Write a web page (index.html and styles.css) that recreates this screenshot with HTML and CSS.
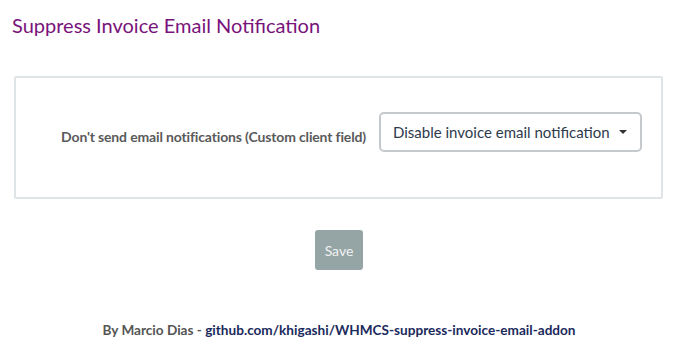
FILE: index.html
```html
<!DOCTYPE html>
<html lang="en">
<head>
  <meta charset="UTF-8" />
  <title>Suppress Invoice Email Notification</title>
  <link rel="stylesheet" href="styles.css">
</head>
<body>
  <h2 class="page-title">Suppress Invoice Email Notification</h2>

  <form class="settings-form">
    <div class="settings-box">
      <div class="form-row">
        <label class="field-label" for="customfield">Don't send email notifications (Custom client field)</label>
        <div class="select-wrap">
          <span class="select-text">Disable invoice email notification</span>
          <span class="caret"></span>
        </div>
      </div>
    </div>

    <div class="actions">
      <button type="button" class="btn-save">Save</button>
    </div>
  </form>

  <p class="credits">
    By Marcio Dias - <a href="#">github.com/khigashi/WHMCS-suppress-invoice-email-addon</a>
  </p>
</body>
</html>
```

FILE: styles.css
```css
body {
  margin: 0;
  padding: 0 14px;
  background-color: #fff;
  font-family: Lato, 'Open Sans', sans-serif;
  color: #333;
}
.page-title {
  margin: 0;
  padding-top: 13px;
  font-size: 20px;
  font-weight: 400;
  color: #79137b;
  margin-left: -2px;
}
.settings-box {
  box-sizing: border-box;
  margin-top: 39px;
  height: 123px;
  padding-top: 34px;
  border: 2px solid #dfe4e7;
  border-radius: 2px;
  margin-right: 1px;
}
.form-row {
  display: flex;
  align-items: flex-start;
}
.field-label {
  width: 350px;
  margin-top: 16px;
  text-align: right;
  font-size: 14px;
  font-weight: 700;
  color: #5a5a5a;
  padding-right: 13px;
  letter-spacing: -0.15px;
}
.select-wrap {
  box-sizing: border-box;
  width: 263px;
  height: 40px;
  border: 2px solid #c5c9cc;
  border-radius: 5px;
  display: flex;
  align-items: center;
  padding: 0 12px 0 12px;
}
.select-text {
  flex: 1;
  font-size: 15px;
  color: #2d3a4b;
}
.caret {
  width: 0;
  height: 0;
  margin-right: 1px;
  border-left: 4px solid transparent;
  border-right: 4px solid transparent;
  border-top: 4px solid #333;
}
.actions {
  text-align: center;
  margin-top: 31px;
}
.btn-save {
  width: 48px;
  height: 40px;
  border: none;
  border-radius: 3px;
  background-color: #95a5a6;
  color: #f0f2f2;
  font-family: Lato, sans-serif;
  font-size: 14px;
  padding: 0;
}
.credits {
  text-align: center;
  margin-top: 52px;
  font-size: 13.6px;
  font-weight: 700;
  color: #555;
}
.credits a {
  color: #1b2a5c;
  text-decoration: none;
}
```
